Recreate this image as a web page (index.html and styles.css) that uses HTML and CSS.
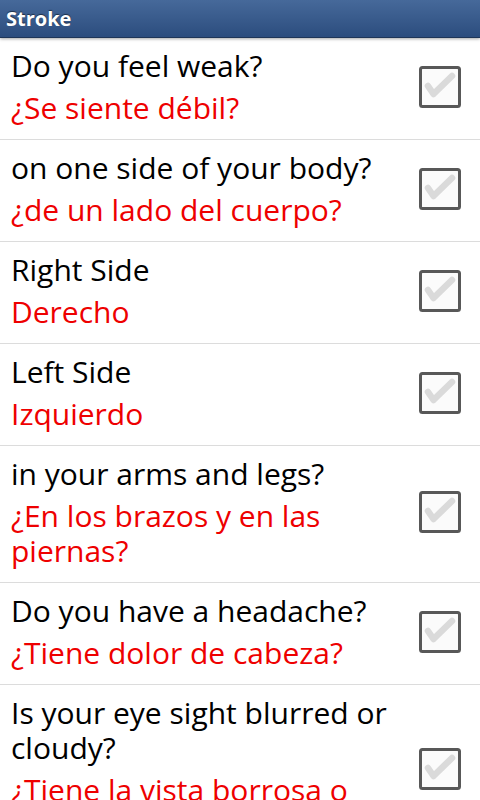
FILE: index.html
```html
<!DOCTYPE html>
<html lang="en">
<head>
  <meta charset="UTF-8" />
  <meta name="viewport" content="width=device-width, initial-scale=1.0" />
  <title>Stroke</title>
  <link rel="stylesheet" href="styles.css">
</head>
<body>
  <div class="title-bar">Stroke</div>

  <ul class="question-list">
    <li class="question">
      <div class="question-text">
        <div class="english">Do you feel weak?</div>
        <div class="spanish">¿Se siente débil?</div>
      </div>
      <span class="check"><svg viewBox="0 0 42 42" width="42" height="42"><rect x="1.5" y="1.5" width="39" height="39" rx="2" class="box"/><path d="M9 20 L14.5 28 L33 10" class="tick"/></svg></span>
    </li>
    <li class="question">
      <div class="question-text">
        <div class="english">on one side of your body?</div>
        <div class="spanish">¿de un lado del cuerpo?</div>
      </div>
      <span class="check"><svg viewBox="0 0 42 42" width="42" height="42"><rect x="1.5" y="1.5" width="39" height="39" rx="2" class="box"/><path d="M9 20 L14.5 28 L33 10" class="tick"/></svg></span>
    </li>
    <li class="question">
      <div class="question-text">
        <div class="english">Right Side</div>
        <div class="spanish">Derecho</div>
      </div>
      <span class="check"><svg viewBox="0 0 42 42" width="42" height="42"><rect x="1.5" y="1.5" width="39" height="39" rx="2" class="box"/><path d="M9 20 L14.5 28 L33 10" class="tick"/></svg></span>
    </li>
    <li class="question">
      <div class="question-text">
        <div class="english">Left Side</div>
        <div class="spanish">Izquierdo</div>
      </div>
      <span class="check"><svg viewBox="0 0 42 42" width="42" height="42"><rect x="1.5" y="1.5" width="39" height="39" rx="2" class="box"/><path d="M9 20 L14.5 28 L33 10" class="tick"/></svg></span>
    </li>
    <li class="question">
      <div class="question-text">
        <div class="english">in your arms and legs?</div>
        <div class="spanish">¿En los brazos y en las piernas?</div>
      </div>
      <span class="check"><svg viewBox="0 0 42 42" width="42" height="42"><rect x="1.5" y="1.5" width="39" height="39" rx="2" class="box"/><path d="M9 20 L14.5 28 L33 10" class="tick"/></svg></span>
    </li>
    <li class="question">
      <div class="question-text">
        <div class="english">Do you have a headache?</div>
        <div class="spanish">¿Tiene dolor de cabeza?</div>
      </div>
      <span class="check"><svg viewBox="0 0 42 42" width="42" height="42"><rect x="1.5" y="1.5" width="39" height="39" rx="2" class="box"/><path d="M9 20 L14.5 28 L33 10" class="tick"/></svg></span>
    </li>
    <li class="question">
      <div class="question-text">
        <div class="english">Is your eye sight blurred or cloudy?</div>
        <div class="spanish">¿Tiene la vista borrosa o nublada?</div>
      </div>
      <span class="check"><svg viewBox="0 0 42 42" width="42" height="42"><rect x="1.5" y="1.5" width="39" height="39" rx="2" class="box"/><path d="M9 20 L14.5 28 L33 10" class="tick"/></svg></span>
    </li>
  </ul>
</body>
</html>
```

FILE: styles.css
```css
body {
  margin: 0;
  font-family: "Open Sans", "DejaVu Sans", sans-serif;
  background-color: #fff;
}
.title-bar {
  position: relative;
  z-index: 1;
  height: 37px;
  line-height: 37px;
  padding-left: 6px;
  font-size: 20px;
  font-weight: bold;
  color: #fff;
  text-shadow: 0 -1px 1px rgba(0,0,0,0.5);
  background: linear-gradient(#46699a, #2c4d7e);
  border-bottom: 1px solid #1f3658;
  box-shadow: 0 1px 3px rgba(0,0,0,0.35);
}
.question-list {
  list-style: none;
  margin: 0;
  padding: 0;
}
.question {
  display: flex;
  align-items: center;
  padding: 10px 19px 14px 11px;
  border-bottom: 1px solid #dcdcdc;
}
.question-text {
  width: 400px;
  font-size: 30px;
  line-height: 35px;
}
.english {
  color: #000;
}
.spanish {
  color: #ee0000;
  margin-top: 7px;
}
.check {
  margin-left: auto;
  display: flex;
}
.check .box {
  fill: #fbfbfb;
  stroke: #585858;
  stroke-width: 3;
}
.check .tick {
  fill: none;
  stroke: #dadada;
  stroke-width: 6.5;
  stroke-linecap: round;
  stroke-linejoin: round;
}
```
